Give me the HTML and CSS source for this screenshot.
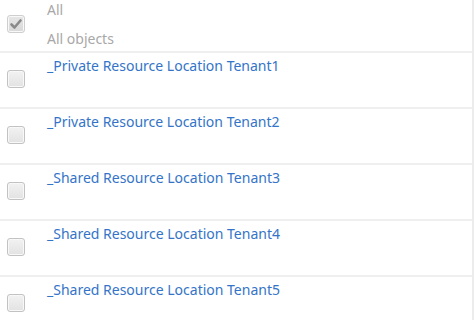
FILE: index.html
```html
<!DOCTYPE html>
<html>
<head>
<meta charset="utf-8">
<link rel="stylesheet" href="styles.css">
</head>
<body>
<div class="list">
  <div class="row head">
    <div class="cb-col"><span class="cb checked"><svg viewBox="0 0 18 18" width="18" height="18"><path d="M4.5 9.5 L7.5 12.5 L13.5 5.5" fill="none" stroke="#8a8a8a" stroke-width="2.6" stroke-linecap="round" stroke-linejoin="round"/></svg></span></div>
    <div class="txt">
      <div class="all">All</div>
      <div class="all sub">All objects</div>
    </div>
  </div>
  <div class="row item"><div class="cb-col"><span class="cb"></span></div><div class="txt"><a class="link">_Private Resource Location Tenant1</a></div></div>
  <div class="row item"><div class="cb-col"><span class="cb"></span></div><div class="txt"><a class="link">_Private Resource Location Tenant2</a></div></div>
  <div class="row item"><div class="cb-col"><span class="cb"></span></div><div class="txt"><a class="link">_Shared Resource Location Tenant3</a></div></div>
  <div class="row item"><div class="cb-col"><span class="cb"></span></div><div class="txt"><a class="link">_Shared Resource Location Tenant4</a></div></div>
  <div class="row item"><div class="cb-col"><span class="cb"></span></div><div class="txt"><a class="link">_Shared Resource Location Tenant5</a></div></div>
</div>
</body>
</html>
```
FILE: styles.css
```css
html, body {
  margin: 0;
  padding: 0;
  background: #fff;
  overflow: hidden;
}
body {
  width: 474px;
  height: 320px;
  font-family: "Noto Sans", "Open Sans", sans-serif;
}
.list {
  width: 472px;
  height: 320px;
  border-right: 2px solid #ececec;
}
.row {
  display: flex;
  box-sizing: border-box;
}
.head {
  height: 51px;
}
.item {
  height: 56px;
  border-top: 2px solid #efefef;
}
.cb-col {
  width: 47px;
  flex: none;
  box-sizing: border-box;
  padding-left: 7px;
}
.head .cb-col {
  padding-top: 15px;
}
.item .cb-col {
  padding-top: 17px;
}
.cb {
  display: block;
  width: 16px;
  height: 16px;
  border: 1px solid #c2c2c2;
  border-radius: 3px;
  background: linear-gradient(#f2f2f2, #e2e2e2);
  box-shadow: inset 0 0 0 1px #f8f8f8;
}
.cb svg {
  display: block;
  margin: -1px;
}
.cb.checked {
  background: linear-gradient(#e6e6e6, #d8d8d8);
  border-color: #cfcfcf;
}
.txt {
  display: flex;
  flex-direction: column;
}
.all {
  color: #a8a8a8;
  font-size: 14px;
  line-height: 19px;
  height: 19px;
}
.all.sub {
  margin-top: 10px;
}
.item .txt {
  padding-top: 3px;
}
.link {
  color: #3474c8;
  font-size: 14px;
  line-height: 20px;
  text-decoration: none;
}
```
